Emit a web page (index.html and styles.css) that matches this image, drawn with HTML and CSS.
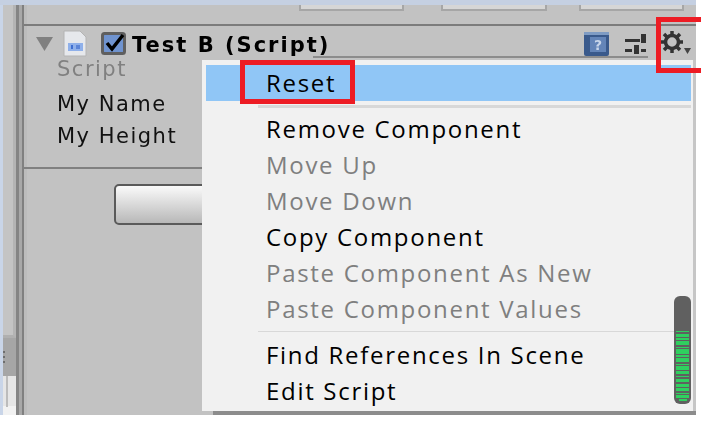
FILE: index.html
```html
<!DOCTYPE html>
<html>
    <head>
        <meta charset="UTF-8">
        <title>Test B (Script)</title>
        <link rel="stylesheet" href="styles.css">
    </head>
    <body>
        <div class="page">
            <div class="top-strip"></div>
            <div class="main">
                <div class="side">
                    <div class="side-panel"></div>
                    <div class="side-handle"><span></span><span></span><span></span></div>
                    <div class="side-tab"><div class="side-tab-inner"></div></div>
                </div>
                <div class="side-rule"></div>
                <div class="inspector">
                    <div class="button-row">
                        <div class="top-btn btn-a"></div>
                        <div class="top-btn btn-b"></div>
                        <div class="top-btn btn-c"></div>
                    </div>
                    <div class="header">
                        <svg class="fold" width="17" height="14" viewBox="0 0 17 14"><polygon points="0,0 17,0 8.5,14" fill="#808080"/></svg>
                        <svg class="file" width="24" height="27" viewBox="0 0 24 27">
                            <path d="M1 1H17L23 7V26H1Z" fill="#e6e8ec" stroke="#b4b4b4"/>
                            <rect x="5" y="13" width="15" height="8" fill="#8fb0ea"/>
                            <rect x="8" y="15" width="2" height="4" fill="#3f6fd0"/>
                            <rect x="13" y="15" width="4" height="4" fill="#5c85d8"/>
                        </svg>
                        <svg class="check" width="26" height="23" viewBox="0 0 26 23">
                            <rect x="1.5" y="1.5" width="22" height="20" rx="2" fill="#6f93cf" stroke="#5f5f5f" stroke-width="3"/>
                            <path d="M6 11L11 17L22 3" fill="none" stroke="#000" stroke-width="3.5"/>
                        </svg>
                        <span class="title">Test B (Script)</span>
                        <svg class="help" width="27" height="26" viewBox="0 0 27 26">
                            <rect x="1" y="1" width="25" height="24" rx="2" fill="#3a5a8c"/>
                            <rect x="1" y="1" width="25" height="3" fill="#7f9cc4"/>
                            <rect x="7" y="6" width="16" height="15" fill="#6485b8"/>
                            <text x="11" y="19" class="help-mark">?</text>
                        </svg>
                        <svg class="presets" width="22" height="20" viewBox="0 0 22 20" fill="#333">
                            <rect x="0" y="5" width="15" height="3"/>
                            <rect x="16" y="0" width="5" height="9"/>
                            <rect x="0" y="15" width="7" height="3"/>
                            <rect x="9" y="11" width="5" height="9"/>
                            <rect x="16" y="15" width="5" height="3"/>
                        </svg>
                        <svg class="gear" width="30" height="26" viewBox="0 0 30 26">
                            <circle cx="11" cy="11" r="6.5" fill="none" stroke="#333" stroke-width="3.5"/>
                            <g stroke="#333" stroke-width="3.5">
                                <path d="M11 0V4M11 18V22M0 11H4M18 11H22M3 3L6 6M16 16L19 19M3 19L6 16M16 6L19 3"/>
                            </g>
                            <polygon points="23,17 30,17 26.5,23" fill="#444"/>
                        </svg>
                    </div>
                    <div class="header-rule"></div>
                    <div class="fields">
                        <div class="field dim">Script</div>
                        <div class="field">My Name</div>
                        <div class="field">My Height</div>
                    </div>
                    <div class="fields-rule"></div>
                    <div class="add-btn"></div>
                </div>
                <div class="gutter"></div>
            </div>

            <div class="menu">
                <div class="item active">Reset</div>
                <div class="sep first"></div>
                <div class="item">Remove Component</div>
                <div class="item off">Move Up</div>
                <div class="item off">Move Down</div>
                <div class="item">Copy Component</div>
                <div class="item off">Paste Component As New</div>
                <div class="item off">Paste Component Values</div>
                <div class="sep"></div>
                <div class="item">Find References In Scene</div>
                <div class="item">Edit Script</div>
            </div>

            <svg class="meter" width="17" height="108" viewBox="0 0 17 108">
                <rect x="0" y="0" width="17" height="108" rx="6" fill="#606060"/>
                <g fill="#2fd05f">
                    <rect x="2" y="35" width="13" height="1"/>
                    <rect x="2" y="38" width="13" height="3"/>
                    <rect x="2" y="42" width="13" height="2"/>
                    <rect x="2" y="45" width="13" height="4"/>
                    <rect x="2" y="51" width="13" height="1"/>
                    <rect x="2" y="53" width="13" height="5"/>
                    <rect x="2" y="59" width="13" height="2"/>
                    <rect x="2" y="62" width="13" height="4"/>
                    <rect x="2" y="68" width="13" height="1"/>
                    <rect x="2" y="70" width="13" height="4"/>
                    <rect x="2" y="75" width="13" height="3"/>
                    <rect x="2" y="80" width="13" height="1"/>
                    <rect x="2" y="83" width="13" height="3"/>
                    <rect x="2" y="88" width="13" height="3"/>
                    <rect x="2" y="92" width="13" height="3"/>
                    <rect x="2" y="97" width="13" height="1"/>
                    <rect x="2" y="99" width="13" height="3"/>
                    <rect x="5" y="103" width="8" height="2"/>
                </g>
            </svg>

            <div class="mark mark-reset"></div>
            <div class="mark mark-gear"></div>
        </div>
    </body>
</html>
```

FILE: styles.css
```css
body {
    margin: 0;
    background-color: #fff;
}
.page {
    position: relative;
    width: 701px;
    height: 424px;
    overflow: hidden;
    font-family: "DejaVu Sans", sans-serif;
}
.top-strip {
    height: 5px;
    margin-right: 5px;
    background-color: #c5d0e2;
}
.main {
    display: flex;
    height: 410px;
    padding-left: 3px;
    background: linear-gradient(to right, #c9d5e8 3px, transparent 3px);
}
.side {
    display: flex;
    flex-direction: column;
    width: 13px;
}
.side-panel {
    height: 333px;
    background-color: #c4c4c4;
    border-right: 3px solid #b4b4b4;
    border-bottom: 3px solid #b0b0b0;
    box-sizing: border-box;
}
.side-handle {
    display: flex;
    flex-direction: column;
    justify-content: center;
    gap: 3px;
    height: 38px;
    background-color: #a6a6a6;
}
.side-handle span {
    width: 2px;
    height: 2px;
    background-color: #6e6e6e;
}
.side-tab {
    flex: 1;
    background: linear-gradient(to bottom, #e6e6e6 78%, #f2f2f2 78%);
}
.side-tab-inner {
    width: 2px;
    height: 31px;
    margin-left: 3px;
    background-color: #bcbcbc;
}
.side-rule {
    width: 8px;
    background: linear-gradient(to right, #858585 3px, #a8a8a8 3px, #a8a8a8 6px, #808080 6px);
}
.inspector {
    width: 672px;
    background-color: #c2c2c2;
    box-shadow: inset 3px 0 #bcbcbc;
}
.gutter {
    flex: 1;
    background-color: #fff;
}
.button-row {
    display: flex;
    height: 19px;
    border-bottom: 2px solid #7c7c7c;
}
.top-btn {
    height: 4px;
    background-color: #d6d6d6;
    border: 2px solid #a6a6a6;
    border-top: none;
}
.btn-a {
    width: 101px;
    margin-left: 275px;
}
.btn-b {
    width: 102px;
    margin-left: 37px;
}
.btn-c {
    width: 101px;
    margin-left: 32px;
}
.header {
    display: flex;
    align-items: center;
    box-sizing: border-box;
    height: 30px;
    padding-top: 5px;
    padding-left: 12px;
    filter: blur(0.5px);
}
.fold {
    margin-right: 10px;
}
.file {
    margin-right: 14px;
}
.check {
    margin-right: 5px;
}
.title {
    font-size: 21px;
    font-weight: bold;
    letter-spacing: 2px;
    color: #000;
    margin-top: 2px;
    margin-right: 253px;
    white-space: nowrap;
}
.help {
    margin-right: 15px;
}
.help-mark {
    font-size: 14px;
    font-weight: bold;
    fill: #c9d6ea;
}
.presets {
    margin-right: 14px;
}
.header-rule {
    height: 2px;
    margin-left: 289px;
    margin-right: 48px;
    background-color: #8c8c8c;
}
.fields {
    padding-left: 33px;
    font-size: 21px;
    letter-spacing: 1.5px;
    color: #111;
    height: 109px;
    filter: blur(0.4px);
}
.field {
    height: 32px;
    line-height: 23px;
    white-space: nowrap;
}
.dim {
    color: #808080;
    height: 35px;
}
.fields-rule {
    height: 2px;
    background-color: #808080;
}
.add-btn {
    width: 100px;
    height: 37px;
    margin: 15px 0 0 90px;
    border: 2px solid #5a5a5a;
    border-radius: 5px;
    background: linear-gradient(to bottom, #fafafa, #b8b8b8);
}
.menu {
    position: absolute;
    left: 202px;
    top: 60px;
    width: 485px;
    height: 346px;
    padding: 5px 2px 0 4px;
    background-color: #f1f1f1;
    border-right: 3px solid #c6c6c6;
    font-family: "Open Sans", sans-serif;
    font-size: 24px;
    letter-spacing: 1.7px;
    color: #000;
}
.menu::after {
    content: "";
    position: absolute;
    left: 11px;
    right: -3px;
    bottom: -4px;
    height: 4px;
    background-color: #8c8c8c;
}
.item {
    height: 36px;
    line-height: 36px;
    padding-left: 60px;
    white-space: nowrap;
}
.active {
    background-color: #90c6f6;
}
.off {
    color: #7f7f7f;
}
.sep {
    height: 1px;
    margin: 4px 0 5px 52px;
    background-color: #d8d8d8;
}
.sep.first {
    height: 3px;
    margin-bottom: 3px;
}
.meter {
    position: absolute;
    left: 674px;
    top: 296px;
}
.mark {
    position: absolute;
    box-sizing: border-box;
    border: 5px solid #ed1c24;
}
.mark-reset {
    left: 240px;
    top: 60px;
    width: 115px;
    height: 44px;
}
.mark-gear {
    left: 656px;
    top: 17px;
    width: 45px;
    height: 56px;
    border-right: none;
}
```
